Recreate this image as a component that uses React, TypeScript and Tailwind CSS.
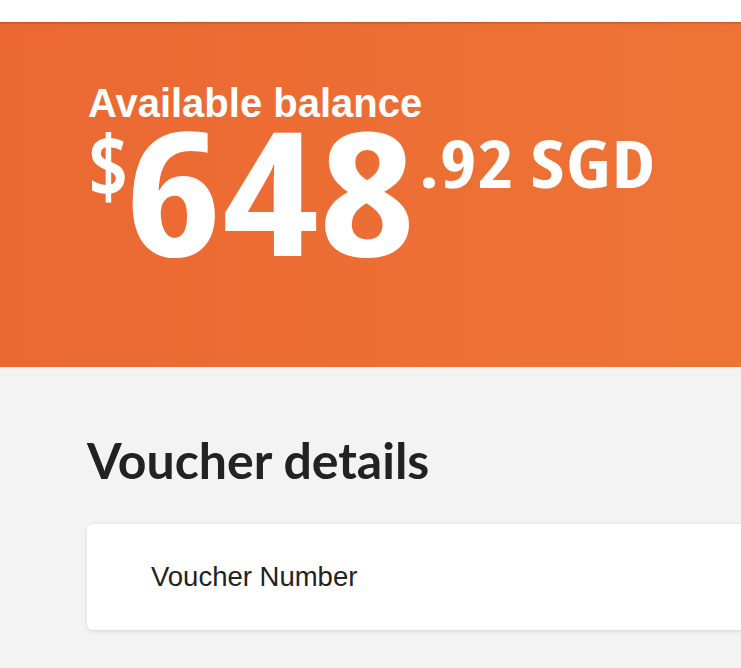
// Wallet balance header + voucher details card.

const balance = { dollars: "648", cents: ".92", currency: "SGD" };

function BalanceHeader() {
  return (
    <section className="h-[345px] bg-gradient-to-r from-[#eb6833] to-[#ee7436] pl-[88px] pt-[61px] text-white">
      <h2 className="font-['Liberation_Sans',Arial,sans-serif] text-[40px] leading-none font-bold">
        Available balance
      </h2>
      {/* condensed face widened a little so the figures read like the brand type */}
      <div className="flex items-start font-['Open_Sans',sans-serif] font-bold font-stretch-condensed">
        <span className="text-[86px] leading-[82px]">$</span>
        <span className="ml-[-3px] w-[294px] shrink-0">
          <span className="inline-block origin-left scale-x-[1.2] text-[172px] leading-[132px]">
            {balance.dollars}
          </span>
        </span>
        <span className="mt-[6px] w-[240px] shrink-0">
          <span className="inline-block origin-left scale-x-[1.18] text-[66px] leading-[67px] tracking-[1px]">
            {balance.cents} {balance.currency}
          </span>
        </span>
      </div>
    </section>
  );
}

function VoucherDetails() {
  return (
    <section className="pl-[87px] pt-[68px]">
      <h3 className="font-['Lato',sans-serif] text-[50px] leading-[50px] font-bold text-[#222]">
        Voucher details
      </h3>
      <div className="mt-[39px] -mr-8 flex h-[106px] items-center rounded-md bg-white pl-[64px] shadow-[0_1px_4px_rgba(0,0,0,0.12)]">
        <span className="font-['Liberation_Sans',Arial,sans-serif] text-[27.5px] text-[#222]">
          Voucher Number
        </span>
      </div>
    </section>
  );
}

export default function App() {
  return (
    <div className="min-h-[668px] overflow-hidden bg-[#f3f3f3]">
      <div className="relative z-10 h-[22px] bg-white shadow-[0_1px_2px_rgba(120,50,20,0.5)]" />
      <BalanceHeader />
      <VoucherDetails />
    </div>
  );
}
